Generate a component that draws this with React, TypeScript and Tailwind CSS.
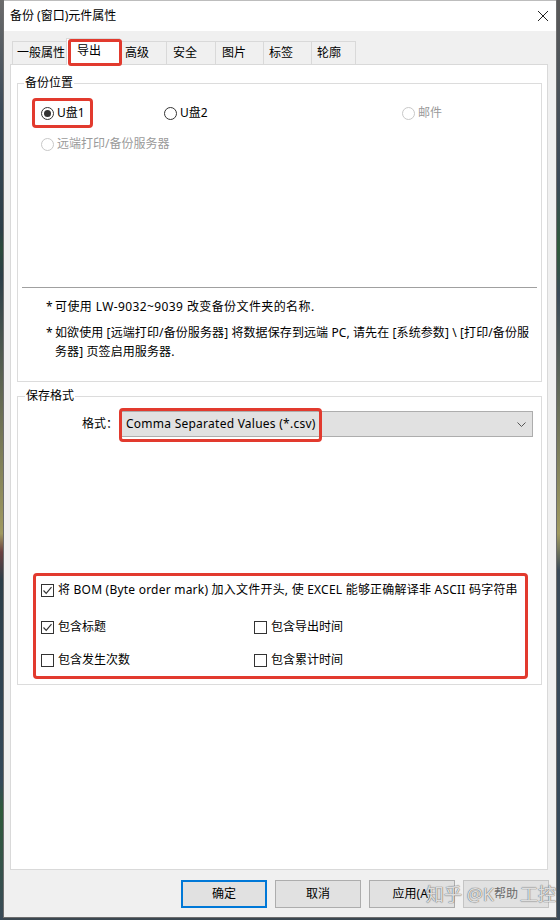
import React from "react";

const FONT = "font-['Noto_Sans','Noto_Sans_CJK_SC',sans-serif]";

function Radio({ checked, disabled, label }: { checked?: boolean; disabled?: boolean; label: string }) {
  return (
    <div className="flex items-center gap-[3px] text-[12px] leading-[20px]">
      <span
        className={
          disabled
            ? "w-[13px] h-[13px] rounded-full border border-[#c8c8c8] bg-white flex items-center justify-center"
            : "w-[13px] h-[13px] rounded-full border border-[#333333] bg-white flex items-center justify-center"
        }
      >
        {checked && <span className="w-[7px] h-[7px] rounded-full bg-[#333333]" />}
      </span>
      <span className={disabled ? "text-[#9a9a9a]" : "text-black"}>{label}</span>
    </div>
  );
}

function Check({ checked, label, w }: { checked?: boolean; label: string; w?: string }) {
  return (
    <div className={"flex items-center gap-[4px] h-[18px] text-[12px] leading-[18px] text-black " + (w ?? "")}>
      <span className="w-[13px] h-[13px] border border-[#333333] bg-white flex items-center justify-center">
        {checked && (
          <svg width="11" height="11" viewBox="0 0 11 11">
            <polyline points="1.5,5.5 4.2,8.3 9.5,2.2" fill="none" stroke="#333333" strokeWidth="1.2" />
          </svg>
        )}
      </span>
      <span className="whitespace-nowrap">{label}</span>
    </div>
  );
}

const tabs = [
  { label: "一般属性", w: "w-[56px] pl-[4px]" },
  { label: "导出", w: "w-[50px]" },
  { label: "高级", w: "w-[48px] pl-[6px]" },
  { label: "安全", w: "w-[49px] pl-[6px]" },
  { label: "图片", w: "w-[48px] pl-[6px]" },
  { label: "标签", w: "w-[48px] pl-[5px]" },
  { label: "轮廓", w: "w-[45px] pl-[5px] border-r" },
];

export default function App() {
  return (
    <div className={"relative w-[560px] h-[920px] flex bg-[#3b4750] overflow-hidden " + FONT}>
      <div className="w-[3px] h-full bg-[linear-gradient(to_bottom,#6b6b6b_0%,#3a4a58_12%,#2c3e48_25%,#2a4a3a_27%,#2c3e48_30%,#a09a60_58%,#6a4040_60%,#2c3e48_63%,#34495a_85%,#2e5a3a_88%,#3a4a58_100%)]" />
      <div className="w-[554px] h-[918px] flex flex-col border-l border-r border-b border-[#6e6e6e]">
        {/* title bar */}
        <div className="h-[31px] bg-white border-t border-[#bdbdbd] flex items-center justify-between pl-[6px] pr-[7px]">
          <span className="text-[12px] text-black">备份 (窗口)元件属性</span>
          <svg width="12" height="12" viewBox="0 0 12 12">
            <path d="M1 1 L11 11 M11 1 L1 11" stroke="#222" strokeWidth="1" />
          </svg>
        </div>
        {/* body */}
        <div className="flex-1 bg-[#f0f0f0] pl-[6px] pr-[8px] pt-[10px] pb-[9px] flex flex-col">
          {/* tabs */}
          <div className="h-[23px] flex items-end ml-[2px]">
            {tabs.map((t, i) =>
              i === 1 ? (
                <div
                  key={t.label}
                  className="relative z-10 w-[54px] h-[27px] -mx-[2px] -mb-[1px] bg-white border-l border-t border-r border-[#d9d9d9] flex items-center pl-[10px] pb-[3px] text-[12px] text-black"
                >
                  {t.label}
                  <span className="absolute left-[1px] top-[0px] w-[54px] h-[27px] border-[3px] border-[#e23a2e] rounded-[3px]" />
                </div>
              ) : (
                <div
                  key={t.label}
                  className={
                    "h-[23px] border-l border-t border-[#d9d9d9] bg-[#f0f0f0] flex items-center text-[12px] text-black " +
                    t.w
                  }
                >
                  {t.label}
                </div>
              )
            )}
          </div>
          {/* panel */}
          <div className="h-[806px] bg-white border border-[#d9d9d9] pl-[6px] pr-[5px] pt-[10px] flex flex-col">
            {/* group 1 */}
            <fieldset className="h-[307px] border border-[#dcdcdc] flex flex-col">
              <legend className="ml-[6px] px-[1px] text-[12px] leading-[16px] text-black">备份位置</legend>
              <div className="mt-[7px] h-[30px] flex items-center">
                <div className="ml-[14px] w-[61px] h-[30px] border-[3px] border-[#e23a2e] rounded-[4px] flex items-center pl-[6px]">
                  <Radio checked label="U盘1" />
                </div>
                <div className="ml-[71px] w-[238px]">
                  <Radio label="U盘2" />
                </div>
                <Radio disabled label="邮件" />
              </div>
              <div className="mt-[6px] ml-[23px]">
                <Radio disabled label="远端打印/备份服务器" />
              </div>
              <div className="mt-[133px] mx-[4px] h-[1px] bg-[#a0a0a0]" />
              <div className="ml-[28px] mt-[9px] text-[12px] leading-[19px] text-black">
                <div className="flex whitespace-nowrap">
                  <span className="w-[9px]">*</span>
                  <span className="tracking-[0.4px]">可使用 LW-9032~9039 改变备份文件夹的名称.</span>
                </div>
                <div className="flex whitespace-nowrap mt-[7px]">
                  <span className="w-[9px]">*</span>
                  <span className="tracking-[0.1px]">
                    如欲使用 [远端打印/备份服务器] 将数据保存到远端 PC, 请先在 [系统参数] \ [打印/备份服
                    <br />
                    务器] 页签启用服务器.
                  </span>
                </div>
              </div>
            </fieldset>
            {/* group 2 */}
            <fieldset className="mt-[6px] h-[297px] border border-[#dcdcdc] flex flex-col">
              <legend className="ml-[7px] px-[1px] text-[12px] leading-[16px] text-black">保存格式</legend>
              <div className="mt-[7px] flex items-center">
                <div className="w-[102px] pr-[2px] text-right text-[12px] text-black">格式：</div>
                <div className="relative w-[413px] h-[26px] bg-[#e1e1e1] border border-[#adadad] flex items-center justify-between pl-[5px] pr-[6px]">
                  <span className="text-[12px] tracking-[0.25px] text-black">Comma Separated Values (*.csv)</span>
                  <svg width="9" height="5" viewBox="0 0 9 5">
                    <polyline points="0.5,0.5 4.5,4.5 8.5,0.5" fill="none" stroke="#555" strokeWidth="1" />
                  </svg>
                  <span className="absolute left-[-2px] top-[-4px] w-[203px] h-[34px] border-[3px] border-[#e23a2e] rounded-[4px]" />
                </div>
              </div>
              <div className="mt-[136px] ml-[15px] w-[495px] h-[106px] border-[3px] border-[#e23a2e] rounded-[4px] pl-[5px] pt-[5px] flex flex-col">
                <div className="tracking-[0.22px]">
                  <Check checked label="将 BOM (Byte order mark) 加入文件开头, 使 EXCEL 能够正确解译非 ASCII 码字符串" />
                </div>
                <div className="mt-[19px] flex">
                  <Check checked label="包含标题" w="w-[213px]" />
                  <Check label="包含导出时间" />
                </div>
                <div className="mt-[15px] flex">
                  <Check label="包含发生次数" w="w-[213px]" />
                  <Check label="包含累计时间" />
                </div>
              </div>
            </fieldset>
          </div>
          {/* buttons */}
          <div className="mt-[10px] -mr-[1px] flex justify-end gap-[8px]">
            <button className="w-[86px] h-[28px] bg-[#e1e1e1] border-2 border-[#0078d7] text-[12px] text-black">确定</button>
            <button className="w-[86px] h-[28px] bg-[#e1e1e1] border border-[#adadad] text-[12px] text-black">取消</button>
            <button className="w-[86px] h-[28px] bg-[#e1e1e1] border border-[#adadad] text-[12px] text-black">应用(A)</button>
            <button className="w-[86px] h-[28px] bg-[#e1e1e1] border border-[#c4c4c4] text-[12px] text-[#6a6a6a]">帮助</button>
          </div>
        </div>
      </div>
      <div className="w-[3px] h-full bg-[linear-gradient(to_bottom,#5a5a5a_0%,#3a4a58_20%,#2e5a3a_27%,#3a4a58_32%,#a09a60_58%,#3a4a58_62%,#34495a_90%,#3a4a58_100%)]" />
      {/* watermark */}
      <div className="absolute left-[426px] top-[880px] h-[28px] flex items-center text-[18px] text-[rgba(255,255,255,0.8)] [text-shadow:0_0_1px_#666,0_0_1px_#666]">
        <span>知乎 @K</span>
        <span className="w-[26px]" />
        <span>工控</span>
      </div>
    </div>
  );
}
